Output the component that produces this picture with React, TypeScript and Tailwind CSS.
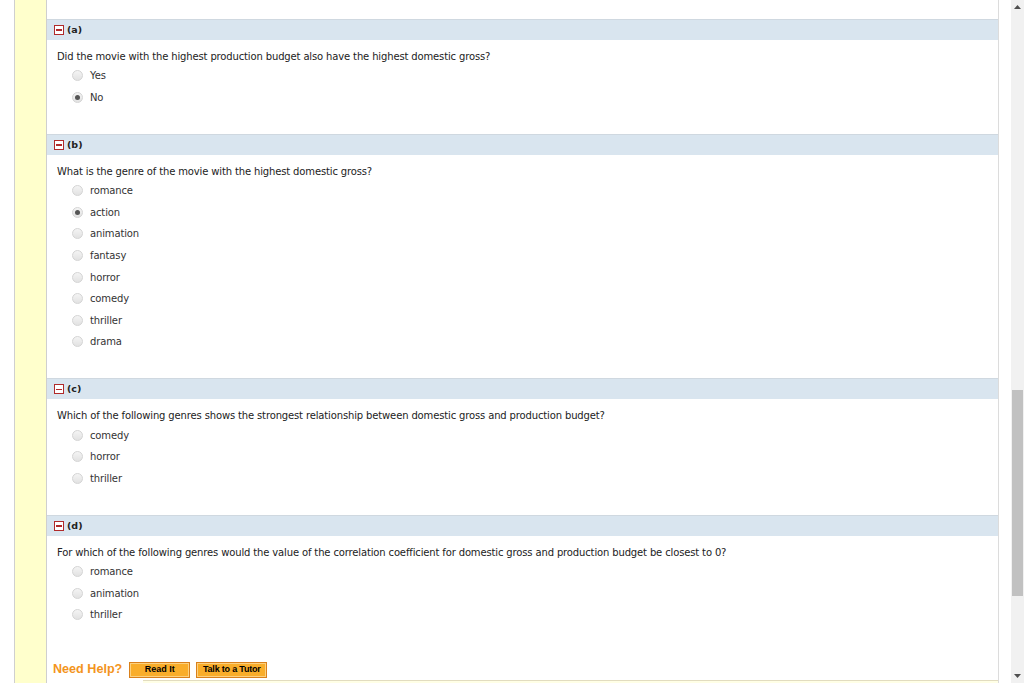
import React from "react";

type Part = { id: string; question: string; options: string[]; checked: number };

const parts: Part[] = [
  { id: "(a)", question: "Did the movie with the highest production budget also have the highest domestic gross?", options: ["Yes", "No"], checked: 1 },
  {
    id: "(b)",
    question: "What is the genre of the movie with the highest domestic gross?",
    options: ["romance", "action", "animation", "fantasy", "horror", "comedy", "thriller", "drama"],
    checked: 1,
  },
  {
    id: "(c)",
    question: "Which of the following genres shows the strongest relationship between domestic gross and production budget?",
    options: ["comedy", "horror", "thriller"],
    checked: -1,
  },
  {
    id: "(d)",
    question: "For which of the following genres would the value of the correlation coefficient for domestic gross and production budget be closest to 0?",
    options: ["romance", "animation", "thriller"],
    checked: -1,
  },
];

function Radio({ on }: { on: boolean }) {
  return (
    <span className="w-[11px] h-[11px] rounded-full border border-[#d4d4d4] bg-gradient-to-b from-[#f4f4f4] to-[#e2e2e2] flex items-center justify-center">
      {on && <span className="w-[5px] h-[5px] rounded-full bg-[#555]" />}
    </span>
  );
}

function MinusBox() {
  return (
    <span className="w-[10px] h-[10px] border border-[#b02a2a] bg-white flex items-center justify-center">
      <span className="w-[6px] h-[1.5px] bg-[#b02a2a]" />
    </span>
  );
}

function Section({ p }: { p: Part }) {
  return (
    <div>
      <div className="h-[21px] bg-[#d9e5ef] border-t border-[#cfd8e0] flex items-center pl-[7px] gap-[3px]">
        <MinusBox />
        <span className="text-[9.5px] font-bold text-[#222]">{p.id}</span>
      </div>
      <div className="pt-[11px] pl-[10px] pb-[26px] tracking-[-0.14px]">
        <div className="h-[12px] leading-[12px] text-[10px] text-[#222]">{p.question}</div>
        <div className="pt-[2px]">
          {p.options.map((o, i) => (
            <div key={o} className="h-[21.55px] flex items-center pl-[15px] gap-[7px]">
              <Radio on={i === p.checked} />
              <span className="text-[10px] text-[#333]">{o}</span>
            </div>
          ))}
        </div>
      </div>
    </div>
  );
}

export default function App() {
  return (
    <div className="h-[683px] w-[1024px] overflow-hidden flex bg-white" style={{ fontFamily: '"DejaVu Sans", Verdana, sans-serif' }}>
      <div className="w-[14px] shrink-0" />
      <div className="w-[33px] shrink-0 bg-[#ffffcc] border-x border-[#cfcfcf]" />
      <div className="flex-1 flex flex-col pt-[19px] border-r border-[#dcdcdc]">
        {parts.map((p) => (
          <Section key={p.id} p={p} />
        ))}
        <div className="mt-[10px] h-[16px] flex items-center pl-[6px] gap-[6px]">
          <span className="text-[12.6px] font-bold text-[#f39420] mr-[1px]" style={{ fontFamily: '"Liberation Sans", Arial, sans-serif' }}>
            Need Help?
          </span>
          <button className="h-[16px] w-[61px] bg-[#f9ad2a] border border-[#d9801b] shadow-[inset_0_0_0_1px_#fcd07e] text-[9px] font-bold text-black" style={{ fontFamily: '"Liberation Sans", Arial, sans-serif' }}>
            Read It
          </button>
          <button className="h-[16px] w-[71px] bg-[#f9ad2a] border border-[#d9801b] shadow-[inset_0_0_0_1px_#fcd07e] text-[9px] font-bold text-black tracking-[-0.2px]" style={{ fontFamily: '"Liberation Sans", Arial, sans-serif' }}>
            Talk to a Tutor
          </button>
        </div>
        <div className="mt-[2px] ml-[96px] h-[4px] border-t border-[#e2dcc0] bg-[#ffffe6]" />
      </div>
      <div className="w-[12px] shrink-0" />
      <div className="w-[13px] shrink-0 bg-[#f1f1f1] flex flex-col items-center">
        <svg width="7" height="4" viewBox="0 0 7 4" className="mt-[5px]">
          <path d="M0 4 L3.5 0 L7 4 Z" fill="#505050" />
        </svg>
        <div className="mt-[381px] w-[11px] h-[206px] bg-[#c1c1c1]" />
        <div className="flex-1" />
        <svg width="7" height="4" viewBox="0 0 7 4" className="mb-[5px]">
          <path d="M0 0 L3.5 4 L7 0 Z" fill="#505050" />
        </svg>
      </div>
    </div>
  );
}
